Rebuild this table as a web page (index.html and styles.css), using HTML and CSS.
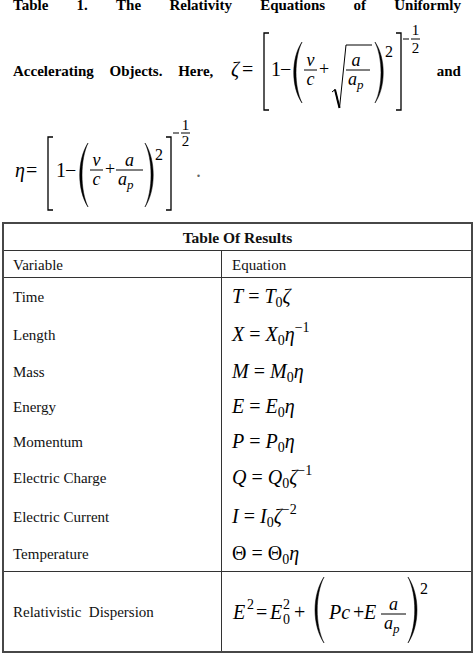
FILE: index.html
```html
<!DOCTYPE html>
<html lang="en">
<head>
<meta charset="utf-8">
<title>Table 1. The Relativity Equations of Uniformly Accelerating Objects</title>
<link rel="stylesheet" href="styles.css">
</head>
<body>
<div class="caption">
  <div class="line line1">
    <span>Table</span><span>1.</span><span>The</span><span>Relativity</span><span>Equations</span><span>of</span><span>Uniformly</span>
  </div>
  <div class="line line2">
    <span class="w">Accelerating</span><span class="w">Objects.</span><span class="w">Here,</span>
    <svg class="f1" width="192" height="92" viewBox="0 0 192 92">
      <text class="mi" x="2" y="56">ζ</text>
      <text class="mo" x="13" y="56">=</text>
      <path class="br" d="M40,13H35V90H40"/>
      <text class="mo" x="42" y="56">1</text>
      <text class="mo" x="51" y="56">−</text>
      <path class="pa" d="M73,22C62,38 62,67 73,83C65,67 65,38 73,22Z"/>
      <text class="fi" x="81.5" y="46" text-anchor="middle">v</text>
      <path class="bar" d="M75,50H88"/>
      <text class="fi" x="81.5" y="65" text-anchor="middle">c</text>
      <text class="mo18" x="90" y="55">+</text>
      <path class="rad" d="M103,72L106,69.5L110.5,88L117,25H143"/>
      <path class="radt" d="M106,69.5L110.5,88"/>
      <text class="fi" x="127" y="46" text-anchor="middle">a</text>
      <path class="bar" d="M117,50H141"/>
      <text class="fi" x="119" y="65">a<tspan class="sb" dy="4">p</tspan></text>
      <path class="pa" d="M146,22C157,38 157,67 146,83C154,67 154,38 146,22Z"/>
      <text class="sp" x="156" y="37">2</text>
      <path class="br" d="M167,13H172V90H167"/>
      <path class="bar" d="M174,19H180"/>
      <text class="ex" x="186.5" y="15" text-anchor="middle">1</text>
      <path class="bar" d="M182,19H191"/>
      <text class="ex" x="186.5" y="33" text-anchor="middle">2</text>
    </svg>
    <span class="w">and</span>
  </div>
  <div class="line3">
    <svg class="f2" width="190" height="100" viewBox="0 0 190 100">
      <text class="mi" x="2" y="62">η</text>
      <text class="mo" x="13" y="62">=</text>
      <path class="br" d="M40,22H35V95H40"/>
      <text class="mo" x="43" y="62">1</text>
      <text class="mo" x="52" y="62">−</text>
      <path class="pa" d="M75,28C64,45 64,75 75,92C67,75 67,45 75,28Z"/>
      <text class="fi" x="83.5" y="51" text-anchor="middle">v</text>
      <path class="bar" d="M77,55H90"/>
      <text class="fi" x="83.5" y="70" text-anchor="middle">c</text>
      <text class="mo18" x="92" y="60">+</text>
      <text class="fi" x="116.5" y="51" text-anchor="middle">a</text>
      <path class="bar" d="M103,55H130"/>
      <text class="fi" x="105" y="70">a<tspan class="sb" dy="4">p</tspan></text>
      <path class="pa" d="M132,28C143,45 143,75 132,92C140,75 140,45 132,28Z"/>
      <text class="sp" x="142" y="45">2</text>
      <path class="br" d="M153,22H158V95H153"/>
      <path class="bar" d="M160,18H166"/>
      <text class="ex" x="172.5" y="15" text-anchor="middle">1</text>
      <path class="bar" d="M168,18H177"/>
      <text class="ex" x="172.5" y="31" text-anchor="middle">2</text>
      <text class="dot" x="183" y="62">.</text>
    </svg>
  </div>
</div>

<table class="results">
  <colgroup><col class="c1"><col class="c2"></colgroup>
  <tr class="head"><th colspan="2">Table Of Results</th></tr>
  <tr class="sub-head"><td class="lab">Variable</td><td class="eqc">Equation</td></tr>
  <tr class="r1"><td class="lab">Time</td><td class="eqc"><span class="eq"><i>T</i> = <i>T</i><span class="sb0">0</span><i>ζ</i></span></td></tr>
  <tr class="r2"><td class="lab">Length</td><td class="eqc"><span class="eq"><i>X</i> = <i>X</i><span class="sb0">0</span><i>η</i><span class="sp0">−1</span></span></td></tr>
  <tr class="r3"><td class="lab">Mass</td><td class="eqc"><span class="eq"><i>M</i> = <i>M</i><span class="sb0">0</span><i>η</i></span></td></tr>
  <tr class="r4"><td class="lab">Energy</td><td class="eqc"><span class="eq"><i>E</i> = <i>E</i><span class="sb0">0</span><i>η</i></span></td></tr>
  <tr class="r5"><td class="lab">Momentum</td><td class="eqc"><span class="eq"><i>P</i> = <i>P</i><span class="sb0">0</span><i>η</i></span></td></tr>
  <tr class="r6"><td class="lab">Electric Charge</td><td class="eqc"><span class="eq"><i>Q</i> = <i>Q</i><span class="sb0">0</span><i>ζ</i><span class="sp0">−1</span></span></td></tr>
  <tr class="r7"><td class="lab">Electric Current</td><td class="eqc"><span class="eq"><i>I</i> = <i>I</i><span class="sb0">0</span><i>ζ</i><span class="sp0">−2</span></span></td></tr>
  <tr class="r8"><td class="lab">Temperature</td><td class="eqc"><span class="eq">Θ = Θ<span class="sb0">0</span><i>η</i></span></td></tr>
  <tr class="r9"><td class="lab">Relativistic&nbsp; Dispersion</td><td class="eqc">
    <svg class="f3" width="200" height="77" viewBox="0 0 200 77">
      <text class="mi" x="2" y="46">E</text>
      <text class="sp14" x="16" y="36">2</text>
      <text class="mo" x="25" y="46">=</text>
      <text class="mi" x="39" y="46">E</text>
      <text class="sp14" x="52" y="36">2</text>
      <text class="sp14" x="52" y="51">0</text>
      <text class="mo" x="63" y="46">+</text>
      <path class="pa" d="M93,4C81,22 81,52 93,70C84,52 84,22 93,4Z"/>
      <text class="mi" x="98" y="46">Pc</text>
      <text class="mo" x="122" y="46">+</text>
      <text class="mi" x="133" y="46">E</text>
      <text class="fi" x="162.5" y="37" text-anchor="middle">a</text>
      <path class="bar" d="M150,41H175"/>
      <text class="fi" x="153" y="56">a<tspan class="sb" dy="4">p</tspan></text>
      <path class="pa" d="M177,4C189,22 189,52 177,70C186,52 186,22 177,4Z"/>
      <text class="sp" x="189" y="21">2</text>
    </svg>
  </td></tr>
</table>
</body>
</html>
```

FILE: styles.css
```css
html, body {
  margin: 0;
  padding: 0;
  background: #ffffff;
}

body {
  font-family: "Liberation Serif", Tinos, "Times New Roman", "DejaVu Serif", serif;
  color: #000000;
}

/* ---------- caption ---------- */
.caption {
  padding: 0 13px;
  font-weight: bold;
  font-size: 15px;
  line-height: 15px;
}

.line {
  display: flex;
  justify-content: space-between;
}

.line1 {
  margin-top: -2px;
}

.line2 {
  margin-top: 7px;
  align-items: flex-start;
}

.line2 .w {
  margin-top: 44px;
}

.f1, .f2, .f3 {
  display: block;
  overflow: visible;
}

.line3 {
  margin-top: 3px;
}

/* svg maths */
svg text {
  font-family: "Liberation Serif", Tinos, "Times New Roman", "DejaVu Serif", serif;
  font-weight: normal;
  fill: #000000;
}

.mi {
  font-style: italic;
  font-size: 20px;
}

.mo {
  font-size: 20px;
}

.mo18 {
  font-size: 18px;
}

.fi {
  font-style: italic;
  font-size: 18px;
}

.sb {
  font-size: 13px;
}

.sp {
  font-size: 16px;
}

.sp14 {
  font-size: 14px;
}

.ex {
  font-size: 15px;
}

.dot {
  font-size: 20px;
  fill: #666666;
}

.br {
  fill: none;
  stroke: #000000;
  stroke-width: 1.3;
}

.pa {
  fill: #000000;
  stroke: #000000;
  stroke-width: 0.5;
}

.bar {
  fill: none;
  stroke: #000000;
  stroke-width: 1;
}

.rad {
  fill: none;
  stroke: #000000;
  stroke-width: 1;
}

.radt {
  fill: none;
  stroke: #000000;
  stroke-width: 2;
}

/* ---------- table ---------- */
.results {
  margin: 7px 0 0 2px;
  width: 471px;
  table-layout: fixed;
  border-collapse: separate;
  border-spacing: 0;
  border: 2px solid #474747;
  font-size: 15px;
  color: #111111;
}

.c1 {
  width: 218px;
}

.results th,
.results td {
  padding: 0;
  vertical-align: middle;
}

.head th {
  height: 27px;
  box-sizing: border-box;
  border-bottom: 1px solid #333333;
  font-weight: bold;
  font-size: 15.5px;
  text-align: center;
  line-height: 18px;
  padding-top: 1px;
}

.results td.lab {
  border-right: 1px solid #333333;
  padding-left: 9px;
  line-height: 22px;
  white-space: nowrap;
}

.results td.eqc {
  padding-left: 10px;
  line-height: 22px;
}

.sub-head td {
  height: 27px;
  box-sizing: border-box;
  border-bottom: 1px solid #333333;
  padding-top: 2px;
}

.eq {
  font-size: 20px;
  line-height: 22px;
  color: #000000;
  white-space: nowrap;
}

.eq i {
  font-style: italic;
}

.sb0 {
  font-size: 14px;
  line-height: 0;
  vertical-align: -4px;
}

.sp0 {
  font-size: 14px;
  line-height: 0;
  vertical-align: 9px;
}

.r1 td { height: 38px; }
.r2 td { height: 38px; }
.r3 td { height: 36px; }
.r4 td { height: 34px; }
.r5 td { height: 35px; }
.r6 td { height: 38px; }
.r7 td { height: 39px; }
.r8 td {
  height: 36px;
  box-sizing: border-box;
  border-bottom: 1px solid #333333;
}

.r9 td {
  height: 79px;
}

.r9 td.eqc {
  padding-left: 9px;
}
```
